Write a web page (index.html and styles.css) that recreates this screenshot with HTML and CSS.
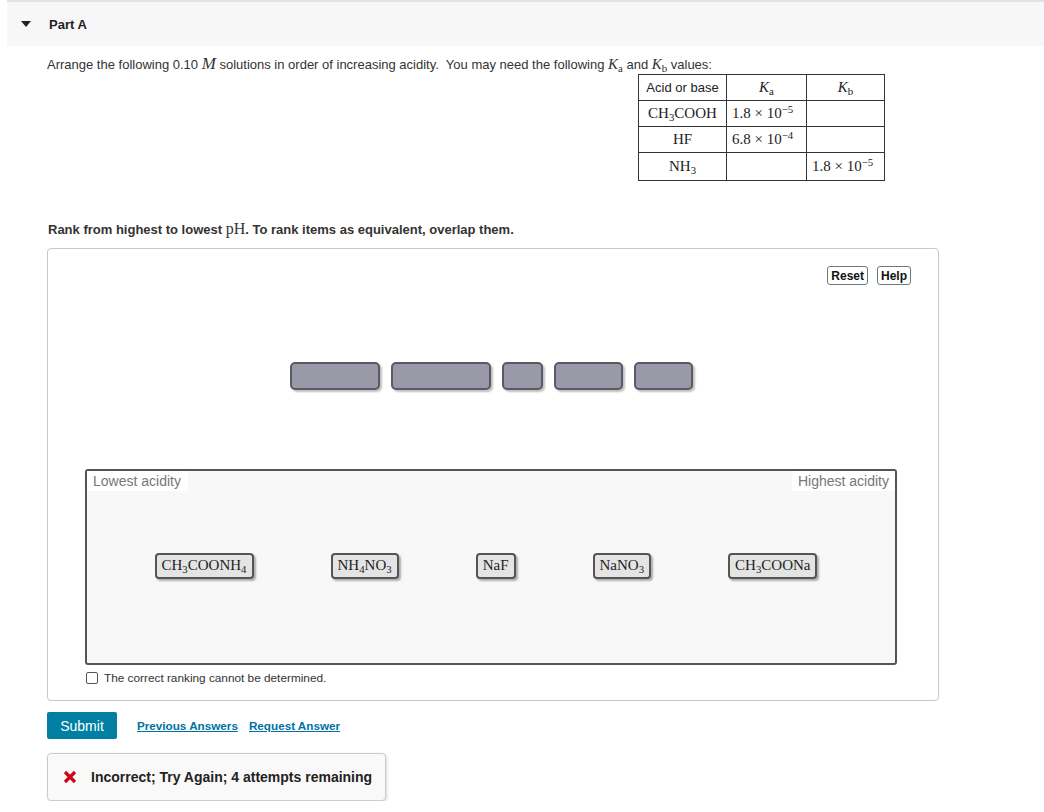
FILE: index.html
```html
<!DOCTYPE html>
<html lang="en">
<head>
    <meta charset="UTF-8">
    <title>Part A</title>
    <link rel="stylesheet" href="styles.css">
</head>
<body>
    <div class="part-header">
        <span class="caret"></span>
        <span class="part-title">Part A</span>
    </div>

    <div class="content">
        <p class="intro">Arrange the following 0.10 <span class="math-i">M</span> solutions in order of increasing acidity.&nbsp; You may need the following <span class="math"><i>K</i><sub>a</sub></span> and <span class="math"><i>K</i><sub>b</sub></span> values:</p>

        <div class="table-wrap">
            <table class="k-table">
                <tr>
                    <th class="sans">Acid or base</th>
                    <th class="math"><i>K</i><sub>a</sub></th>
                    <th class="math"><i>K</i><sub>b</sub></th>
                </tr>
                <tr>
                    <td class="math center">CH<sub>3</sub>COOH</td>
                    <td class="math">1.8 &times; 10<sup>&minus;5</sup></td>
                    <td></td>
                </tr>
                <tr>
                    <td class="math center">HF</td>
                    <td class="math">6.8 &times; 10<sup>&minus;4</sup></td>
                    <td></td>
                </tr>
                <tr>
                    <td class="math center">NH<sub>3</sub></td>
                    <td></td>
                    <td class="math">1.8 &times; 10<sup>&minus;5</sup></td>
                </tr>
            </table>
        </div>

        <p class="prompt">Rank from highest to lowest <span class="math">pH</span>. To rank items as equivalent, overlap them.</p>

        <div class="rank-box">
            <div class="toolbar">
                <button class="tool-btn">Reset</button>
                <button class="tool-btn">Help</button>
            </div>

            <div class="slots">
                <span class="slot" style="width: 90px"></span>
                <span class="slot" style="width: 100px"></span>
                <span class="slot" style="width: 41px"></span>
                <span class="slot" style="width: 69px"></span>
                <span class="slot" style="width: 59px"></span>
            </div>

            <div class="tray">
                <span class="tray-label left">Lowest acidity</span>
                <span class="tray-label right">Highest acidity</span>
                <div class="items">
                    <span class="item">CH<sub>3</sub>COONH<sub>4</sub></span>
                    <span class="item">NH<sub>4</sub>NO<sub>3</sub></span>
                    <span class="item">NaF</span>
                    <span class="item">NaNO<sub>3</sub></span>
                    <span class="item">CH<sub>3</sub>COONa</span>
                </div>
            </div>

            <label class="check-row">
                <span class="check-box"></span>
                The correct ranking cannot be determined.
            </label>
        </div>

        <div class="actions">
            <button class="submit">Submit</button>
            <a href="#" class="link">Previous Answers</a>
            <a href="#" class="link">Request Answer</a>
        </div>

        <div class="feedback">
            <svg class="x-icon" width="14" height="14" viewBox="0 0 14 14">
                <path d="M2 2 L12 12 M12 2 L2 12" stroke="#d0021b" stroke-width="3.2" stroke-linecap="butt"/>
            </svg>
            <span>Incorrect; Try Again; 4 attempts remaining</span>
        </div>
    </div>
</body>
</html>
```

FILE: styles.css
```css
body {
    margin: 0;
    font-family: "Liberation Sans", Arial, sans-serif;
    color: #333;
    background: #fff;
}
.part-header {
    margin-left: 7px;
    height: 44px;
    border-top: 2px solid #e3e3e3;
    background: #f7f7f7;
    display: flex;
    align-items: center;
}
.caret {
    width: 0;
    height: 0;
    margin-left: 14px;
    border-left: 5px solid transparent;
    border-right: 5px solid transparent;
    border-top: 6px solid #222;
}
.part-title {
    margin-left: 18px;
    font-weight: bold;
    font-size: 13px;
    color: #222;
}
.content {
    padding-left: 47px;
    width: 892px;
}
.intro {
    margin: 10px 0 0 0;
    font-size: 13px;
    line-height: 16px;
}
.math, .math-i {
    font-family: "Liberation Serif", "Times New Roman", serif;
    font-size: 15px;
}
.math-i {
    font-style: italic;
    font-size: 17px;
}
sub, sup {
    font-size: 72%;
    line-height: 0;
}
sub {
    vertical-align: -0.28em;
}
sup {
    vertical-align: 0.5em;
}
.table-wrap {
    padding-left: 591px;
    margin-top: 1px;
}
.k-table {
    border-collapse: collapse;
}
.k-table th, .k-table td {
    border: 1px solid #333;
    height: 25px;
    padding: 0 5px;
    font-weight: normal;
    text-align: left;
    color: #222;
}
.k-table th {
    text-align: center;
}
.k-table th.sans {
    font-family: "Liberation Sans", Arial, sans-serif;
    font-size: 13px;
    width: 75px;
    padding: 0 6px;
}
.k-table th:nth-child(2) { width: 69px; }
.k-table th:nth-child(3) { width: 67px; }
.k-table tr:last-child td { height: 27px; }
.k-table td.center {
    text-align: center;
    padding: 0 3px;
}
.prompt {
    margin: 40px 0 0 1px;
    font-size: 13px;
    font-weight: bold;
    line-height: 16px;
}
.prompt .math {
    font-weight: normal;
    font-size: 16px;
}
.rank-box {
    margin-top: 10px;
    height: 451px;
    border: 1px solid #c8c8c8;
    border-radius: 4px;
}
.toolbar {
    display: flex;
    justify-content: flex-end;
    gap: 9px;
    padding: 17px 27px 0 0;
}
.tool-btn {
    font-family: "Liberation Sans", Arial, sans-serif;
    font-size: 12px;
    font-weight: bold;
    color: #111;
    background: #fff;
    border: 1px solid #6c7a7a;
    border-radius: 3px;
    height: 19px;
    padding: 0 3px;
}
.slots {
    display: flex;
    justify-content: center;
    gap: 11px;
    margin-top: 77px;
    padding-right: 3px;
}
.slot {
    height: 28px;
    box-sizing: border-box;
    background: #9a99a7;
    border: 2px solid #5a5a66;
    border-radius: 5px;
    box-shadow: 2px 2px 2px rgba(0,0,0,0.25);
}
.tray {
    position: relative;
    margin: 79px 41px 0 37px;
    height: 192px;
    border: 2px solid #555;
    border-radius: 3px;
    background: #f8f8f8;
}
.tray-label {
    position: absolute;
    top: 0;
    background: #fff;
    color: #777;
    font-size: 14px;
    line-height: 20px;
    padding: 0 7px 0 6px;
}
.tray-label.left { left: 0; }
.tray-label.right { right: 0; padding: 0 6px; }
.items {
    display: flex;
    justify-content: center;
    gap: 77px;
    padding-right: 10px;
    margin-top: 82px;
}
.item {
    font-family: "Liberation Serif", "Times New Roman", serif;
    font-size: 15px;
    color: #222;
    height: 26px;
    line-height: 21px;
    box-sizing: border-box;
    padding: 0 5px;
    background: #e4e4e4;
    border: 2px solid #555;
    border-radius: 4px;
    box-shadow: 2px 2px 2px rgba(0,0,0,0.3);
}
.check-row {
    display: flex;
    align-items: center;
    gap: 6px;
    margin: 6px 0 0 38px;
    font-size: 11.8px;
    color: #333;
}
.check-box {
    width: 10px;
    height: 10px;
    border: 1.5px solid #555;
    border-radius: 2px;
    background: #fff;
}
.actions {
    display: flex;
    align-items: center;
    margin-top: 11px;
}
.submit {
    width: 70px;
    height: 27px;
    background: #007fa3;
    color: #fff;
    border: none;
    border-radius: 2px;
    font-family: "Liberation Sans", Arial, sans-serif;
    font-size: 14px;
    margin-right: 20px;
}
.link {
    color: #0071a3;
    font-size: 11.7px;
    font-weight: bold;
    margin-right: 11px;
}
.feedback {
    margin-top: 14px;
    width: 337px;
    height: 46px;
    border: 1px solid #ccc;
    border-radius: 4px;
    background: #f9f9f9;
    box-shadow: 1px 1px 3px rgba(0,0,0,0.15);
    display: flex;
    align-items: center;
    font-size: 14px;
    font-weight: bold;
    color: #222;
}
.x-icon {
    margin: 0 14px 0 15px;
}
```
